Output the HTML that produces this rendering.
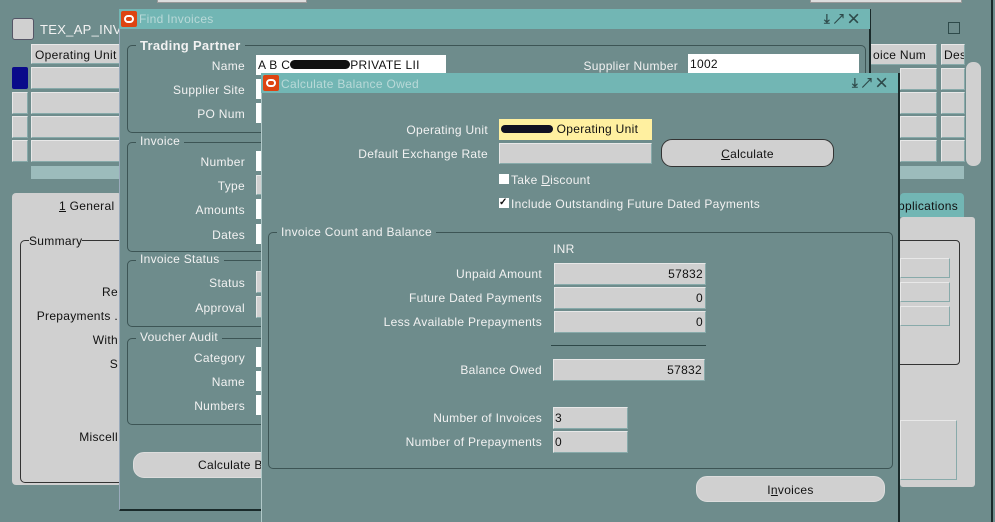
<!DOCTYPE html>
<html><head><meta charset="utf-8"><style>
*{margin:0;padding:0;box-sizing:border-box}
html,body{width:995px;height:522px;overflow:hidden}
body{background:#6e8c8c;font-family:"Liberation Sans",sans-serif;font-size:12px;letter-spacing:0.3px;color:#f2f2f2;position:relative}
.a{position:absolute}
.g{background:#d0d0d0;border:1px solid #e8e8e8;border-right-color:#8aa;border-bottom-color:#8aa}
.w{background:#fff}
.lbl{position:absolute;text-align:right;white-space:nowrap}
.fr{position:absolute;border:1px solid #3d5555;border-radius:5px}
.ft{position:absolute;background:#6e8c8c;padding:0 4px;top:-9px;left:8px;white-space:nowrap}
.tb{position:absolute;background:#72b6b4;color:#b9d9d8}
.btn{position:absolute;background:#d0d0d0;border:1px solid #333;border-radius:11px;color:#111;text-align:center}
.dk{color:#111}
.ctl{position:absolute;color:#2e4a4a;font-size:13px;font-weight:bold}
</style></head><body>
<div class="a" style="left:157px;top:-2px;width:150px;height:5px;background:#ddd;border:1px solid #999"></div>
<div class="a" style="left:810px;top:-2px;width:152px;height:5px;background:#ddd;border:1px solid #999"></div>
<div class="a" style="left:991px;top:0;width:2px;height:522px;background:#1a2a2a"></div>

<div class="a" style="left:12px;top:18px;width:22px;height:22px;background:#d0d0d0;border:1px solid #556;border-radius:3px"></div>
<div class="a" style="left:40px;top:22px;font-size:13px">TEX_AP_INV</div>
<div class="a g dk" style="left:31px;top:44px;width:90px;height:20px;padding:3px 3px;white-space:nowrap;overflow:hidden">Operating Unit</div>
<div class="a" style="left:12px;top:67px;width:16px;height:22px;background:#0a0a8a;border-radius:2px"></div>
<div class="a g" style="left:12px;top:92px;width:16px;height:22px"></div>
<div class="a g" style="left:12px;top:116px;width:16px;height:22px"></div>
<div class="a g" style="left:12px;top:140px;width:16px;height:22px"></div>
<div class="a g" style="left:31px;top:67px;width:90px;height:22px"></div>
<div class="a g" style="left:31px;top:92px;width:90px;height:22px"></div>
<div class="a g" style="left:31px;top:116px;width:90px;height:22px"></div>
<div class="a g" style="left:31px;top:140px;width:90px;height:22px"></div>
<div class="a" style="left:31px;top:166px;width:90px;height:13px;background:#9cbcbc"></div>
<div class="a" style="left:12px;top:193px;width:110px;height:292px;background:#d0d0d0;border-radius:4px"></div>
<div class="a dk" style="left:59px;top:199px"><u>1</u> General</div>
<div class="a" style="left:20px;top:240px;width:110px;height:243px;border:1px solid #333;border-radius:5px"></div>
<div class="a dk" style="left:29px;top:234px;background:#d0d0d0">Summary</div>
<div class="lbl dk" style="left:20px;width:98px;top:285px">Re</div>
<div class="lbl dk" style="left:20px;width:98px;top:309px">Prepayments .</div>
<div class="lbl dk" style="left:20px;width:98px;top:333px">With</div>
<div class="lbl dk" style="left:20px;width:98px;top:357px">S</div>
<div class="lbl dk" style="left:20px;width:98px;top:430px">Miscell</div>

<div class="a" style="left:948px;top:22px;width:12px;height:12px;border:1px solid #2e4a4a"></div>
<div class="a g dk" style="left:862px;top:44px;width:75px;height:21px;padding:3px 0 0 10px">oice Num</div>
<div class="a g dk" style="left:941px;top:44px;width:24px;height:21px;padding:3px 2px;overflow:hidden">Des</div>
<div class="a g" style="left:900px;top:68px;width:37px;height:22px"></div>
<div class="a g" style="left:900px;top:92px;width:37px;height:22px"></div>
<div class="a g" style="left:900px;top:116px;width:37px;height:22px"></div>
<div class="a g" style="left:900px;top:140px;width:37px;height:22px"></div>
<div class="a g" style="left:941px;top:68px;width:24px;height:22px"></div>
<div class="a g" style="left:941px;top:92px;width:24px;height:22px"></div>
<div class="a g" style="left:941px;top:116px;width:24px;height:22px"></div>
<div class="a g" style="left:941px;top:140px;width:24px;height:22px"></div>
<div class="a" style="left:966px;top:62px;width:15px;height:104px;background:#d0d0d0;border-radius:7px"></div>
<div class="a" style="left:900px;top:166px;width:64px;height:13px;background:#9cbcbc"></div>
<div class="a" style="left:900px;top:193px;width:64px;height:24px;background:#72b6b4;border-radius:4px 4px 0 0"></div>
<div class="a dk" style="left:898px;top:199px">pplications</div>
<div class="a" style="left:900px;top:217px;width:75px;height:270px;background:#d0d0d0;border-radius:3px"></div>
<div class="a" style="left:890px;top:240px;width:70px;height:125px;border:1px solid #333;border-radius:4px"></div>
<div class="a g" style="left:900px;top:258px;width:50px;height:20px"></div>
<div class="a g" style="left:900px;top:282px;width:50px;height:20px"></div>
<div class="a g" style="left:900px;top:306px;width:50px;height:20px"></div>
<div class="a g" style="left:900px;top:420px;width:57px;height:60px"></div>

<div class="a" style="left:119px;top:9px;width:752px;height:502px;background:#6e8c8c;border-right:2px solid #1a2a2a;border-bottom:2px solid #1a2a2a;border-left:1px solid #9ab"></div>
<div class="tb" style="left:119px;top:9px;width:751px;height:20px"></div>
<div class="a" style="left:121px;top:11px;width:16px;height:16px;background:#d41;border-radius:2px"><div style="margin:4px 3px;width:10px;height:8px;border:2px solid #fff;border-radius:4px"></div></div>
<div class="a" style="left:139px;top:12px;color:#b9d9d8">Find Invoices</div>
<div class="ctl" style="left:824px;top:11px">⤓ ↗ ✕</div>
<div class="fr" style="left:127px;top:45px;width:739px;height:88px"><div class="ft" style="font-weight:bold;font-size:13px;top:-8px">Trading Partner</div></div>
<div class="lbl" style="left:127px;width:118px;top:59px">Name</div>
<div class="a w dk" style="left:256px;top:55px;width:190px;height:20px;padding:3px 2px;white-space:nowrap;overflow:hidden">A B C<span style="background:#111;display:inline-block;width:60px;height:9px;border-radius:5px"></span>PRIVATE LII</div>
<div class="lbl" style="left:127px;width:118px;top:83px">Supplier Site</div>
<div class="lbl" style="left:127px;width:118px;top:107px">PO Num</div>
<div class="a w" style="left:256px;top:79px;width:10px;height:20px"></div>
<div class="a w" style="left:256px;top:103px;width:10px;height:20px"></div>
<div class="lbl" style="left:500px;width:178px;top:59px">Supplier Number</div>
<div class="a w dk" style="left:688px;top:54px;width:171px;height:20px;padding:3px 2px">1002</div>
<div class="fr" style="left:127px;top:142px;width:140px;height:110px"><div class="ft">Invoice</div></div>
<div class="lbl" style="left:127px;width:118px;top:155px">Number</div>
<div class="lbl" style="left:127px;width:118px;top:179px">Type</div>
<div class="lbl" style="left:127px;width:118px;top:203px">Amounts</div>
<div class="lbl" style="left:127px;width:118px;top:228px">Dates</div>
<div class="a w" style="left:256px;top:151px;width:10px;height:20px"></div>
<div class="a g" style="left:256px;top:175px;width:10px;height:20px"></div>
<div class="a w" style="left:256px;top:199px;width:10px;height:20px"></div>
<div class="a w" style="left:256px;top:224px;width:10px;height:20px"></div>
<div class="fr" style="left:127px;top:260px;width:140px;height:67px"><div class="ft">Invoice Status</div></div>
<div class="lbl" style="left:127px;width:118px;top:276px">Status</div>
<div class="lbl" style="left:127px;width:118px;top:301px">Approval</div>
<div class="a g" style="left:256px;top:271px;width:10px;height:22px"></div>
<div class="a g" style="left:256px;top:296px;width:10px;height:22px"></div>
<div class="fr" style="left:127px;top:338px;width:140px;height:87px"><div class="ft">Voucher Audit</div></div>
<div class="lbl" style="left:127px;width:118px;top:351px">Category</div>
<div class="lbl" style="left:127px;width:118px;top:375px">Name</div>
<div class="lbl" style="left:127px;width:118px;top:399px">Numbers</div>
<div class="a w" style="left:256px;top:347px;width:10px;height:20px"></div>
<div class="a w" style="left:256px;top:371px;width:10px;height:20px"></div>
<div class="a w" style="left:256px;top:395px;width:10px;height:20px"></div>
<div class="btn" style="left:133px;top:452px;width:140px;height:26px;padding-top:5px;text-align:left;padding-left:64px;border-color:#ddd;white-space:nowrap">Calculate B</div>

<div class="a" style="left:261px;top:73px;width:639px;height:449px;background:#6e8c8c;border-left:1px solid #b0c8c8;border-right:2px solid #1a2a2a"></div>
<div class="tb" style="left:261px;top:73px;width:637px;height:20px"></div>
<div class="a" style="left:263px;top:75px;width:16px;height:16px;background:#d41;border-radius:2px"><div style="margin:4px 3px;width:10px;height:8px;border:2px solid #fff;border-radius:4px"></div></div>
<div class="a" style="left:281px;top:77px;color:#b9d9d8">Calculate Balance Owed</div>
<div class="ctl" style="left:852px;top:75px">⤓ ↗ ✕</div>
<div class="lbl" style="left:300px;width:188px;top:123px">Operating Unit</div>
<div class="a dk" style="left:499px;top:119px;width:153px;height:21px;background:#fff0a0;padding:3px 2px;white-space:nowrap;overflow:hidden"><span style="background:#112;display:inline-block;width:52px;height:8px;border-radius:4px"></span> Operating Unit</div>
<div class="lbl" style="left:300px;width:188px;top:147px">Default Exchange Rate</div>
<div class="a g" style="left:499px;top:143px;width:153px;height:21px"></div>
<div class="btn" style="left:661px;top:139px;width:173px;height:28px;padding-top:7px"><u>C</u>alculate</div>
<div class="a w" style="left:499px;top:174px;width:10px;height:10px"></div>
<div class="a" style="left:511px;top:173px">Take <u>D</u>iscount</div>
<div class="a w dk" style="left:499px;top:198px;width:10px;height:10px;font-size:10px;line-height:9px;font-weight:bold">✓</div>
<div class="a" style="left:511px;top:197px">Include Outstanding Future Dated Payments</div>
<div class="fr" style="left:268px;top:232px;width:625px;height:237px"><div class="ft" style="top:-8px">Invoice Count and Balance</div></div>
<div class="a" style="left:553px;top:242px">INR</div>
<div class="lbl" style="left:300px;width:242px;top:267px">Unpaid Amount</div>
<div class="lbl" style="left:300px;width:242px;top:291px">Future Dated Payments</div>
<div class="lbl" style="left:300px;width:242px;top:315px">Less Available Prepayments</div>
<div class="lbl" style="left:300px;width:242px;top:363px">Balance Owed</div>
<div class="lbl" style="left:300px;width:242px;top:411px">Number of Invoices</div>
<div class="lbl" style="left:300px;width:242px;top:435px">Number of Prepayments</div>
<div class="a g dk" style="left:554px;top:263px;width:152px;height:22px;text-align:right;padding:3px 2px">57832</div>
<div class="a g dk" style="left:554px;top:287px;width:152px;height:22px;text-align:right;padding:3px 2px">0</div>
<div class="a g dk" style="left:554px;top:311px;width:152px;height:22px;text-align:right;padding:3px 2px">0</div>
<div class="a" style="left:551px;top:345px;width:155px;height:1px;background:#2e4848"></div>
<div class="a g dk" style="left:553px;top:359px;width:152px;height:22px;text-align:right;padding:3px 2px">57832</div>
<div class="a g dk" style="left:553px;top:407px;width:75px;height:22px;padding:3px 1px">3</div>
<div class="a g dk" style="left:553px;top:431px;width:75px;height:22px;padding:3px 1px">0</div>
<div class="btn" style="left:696px;top:476px;width:189px;height:26px;padding-top:6px;border-color:#ddd">I<u>n</u>voices</div>
</body></html>
